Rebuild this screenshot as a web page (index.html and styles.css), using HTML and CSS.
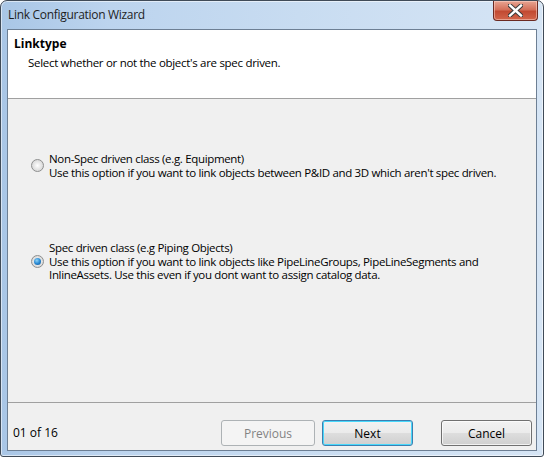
FILE: index.html
```html
<!DOCTYPE html>
<html lang="en">
<head>
    <meta charset="UTF-8">
    <title>Link Configuration Wizard</title>
    <link rel="stylesheet" href="styles.css">
</head>
<body>
    <div class="janela">
        <div class="barra-titulo">
            <span class="titulo">Link Configuration Wizard</span>
            <div class="fechar">
                <svg width="15" height="13" viewBox="0 0 15 13">
                    <path d="M2 1.5 L13 11.5 M13 1.5 L2 11.5" stroke="#3a3a3a" stroke-width="4.4" stroke-linecap="square"/>
                    <path d="M2 1.5 L13 11.5 M13 1.5 L2 11.5" stroke="#ffffff" stroke-width="2.4" stroke-linecap="square"/>
                </svg>
            </div>
        </div>
        <div class="cliente">
            <div class="cabecalho">
                <div class="cabecalho-titulo">Linktype</div>
                <div class="cabecalho-texto">Select whether or not the object's are spec driven.</div>
            </div>
            <div class="conteudo">
                <label class="opcao opcao-1">
                    <span class="radio"></span>
                    <span class="opcao-texto">Non-Spec driven class (e.g. Equipment)<br>Use this option if you want to link objects between P&amp;ID and 3D which aren't spec driven.</span>
                </label>
                <label class="opcao opcao-2">
                    <span class="radio marcado"></span>
                    <span class="opcao-texto">Spec driven class (e.g Piping Objects)<br>Use this option if you want to link objects like PipeLineGroups, PipeLineSegments and<br>InlineAssets. Use this even if you dont want to assign catalog data.</span>
                </label>
            </div>
            <div class="rodape">
                <span class="pagina">01 of 16</span>
                <div class="botoes">
                    <button class="botao desativado">Previous</button>
                    <button class="botao padrao">Next</button>
                    <button class="botao cancelar">Cancel</button>
                </div>
            </div>
        </div>
    </div>
</body>
</html>
```

FILE: styles.css
```css
body {
    margin: 0;
    font: 12px "Open Sans", "Noto Sans", sans-serif;
    color: #000;
}
div.janela {
    box-sizing: border-box;
    width: 544px;
    height: 457px;
    display: flex;
    flex-direction: column;
    padding: 0 6px 5px 6px;
    border: 1px solid #404b58;
    border-radius: 7px 7px 3px 3px;
    background: linear-gradient(90deg, #a9c6e6 0%, #bcd4ee 20%, #c8dcf1 55%, #d6e5f5 100%);
    box-shadow: inset 0 0 0 1px rgba(255, 255, 255, 0.55);
}
div.barra-titulo {
    height: 28px;
    display: flex;
    justify-content: space-between;
    align-items: flex-start;
}
span.titulo {
    margin: 5px 0 0 1px;
    font-size: 12px;
    letter-spacing: -0.3px;
    color: #1e1e1e;
}
div.fechar {
    width: 43px;
    height: 19px;
    margin-right: -1px;
    display: flex;
    align-items: center;
    justify-content: center;
    border: 1px solid #6b2a22;
    border-top: none;
    border-radius: 0 0 4px 4px;
    background: linear-gradient(180deg, #e8a593 0%, #d4705a 45%, #c24a32 55%, #d2654b 100%);
    box-shadow: inset 0 0 0 1px rgba(255, 220, 210, 0.5);
}
div.cliente {
    flex: 1;
    display: flex;
    flex-direction: column;
    border: 1px solid #6d7f94;
    background-color: #f0f0f0;
}
div.cabecalho {
    height: 69px;
    background-color: #fff;
    border-bottom: 1px solid #a0a0a0;
    padding: 6px 0 0 6px;
    box-sizing: border-box;
}
div.cabecalho-titulo {
    font-weight: bold;
    line-height: 16px;
}
div.cabecalho-texto {
    margin: 3px 0 0 14px;
    font-size: 11.5px;
    line-height: 16px;
    letter-spacing: -0.3px;
}
div.conteudo {
    flex: 1;
    padding: 0 0 0 23px;
}
label.opcao {
    display: flex;
    align-items: center;
    gap: 5px;
}
label.opcao-1 {
    margin-top: 53px;
}
label.opcao-2 {
    margin-top: 62px;
}
span.opcao-texto {
    font-size: 11.5px;
    line-height: 13.5px;
    letter-spacing: -0.33px;
}
span.radio {
    width: 11px;
    height: 11px;
    border-radius: 50%;
    border: 1px solid #8e8f8f;
    background: radial-gradient(circle at 50% 50%, #ffffff 0%, #e2e2e2 55%, #cfcfcf 100%);
    flex: none;
    position: relative;
}
span.radio.marcado::after {
    content: "";
    position: absolute;
    left: 2px;
    top: 2px;
    width: 7px;
    height: 7px;
    border-radius: 50%;
    background: radial-gradient(circle at 40% 35%, #8fd4f7 0%, #2a8ad4 50%, #0d4f8c 100%);
}
div.rodape {
    height: 48px;
    border-top: 1px solid #a0a0a0;
    display: flex;
    align-items: flex-start;
    justify-content: space-between;
    padding: 17px 4px 0 5px;
    box-sizing: border-box;
}
span.pagina {
    margin-top: 4px;
}
div.botoes {
    display: flex;
}
button.botao {
    font: 12px "Open Sans", "Noto Sans", sans-serif;
    width: 94px;
    height: 26px;
    border: 1px solid #707070;
    border-radius: 3px;
    background: linear-gradient(180deg, #f2f2f2 0%, #ebebeb 48%, #dddddd 52%, #cfcfcf 100%);
    box-shadow: inset 0 0 0 1px rgba(255, 255, 255, 0.7);
    color: #000;
    padding: 0;
}
button.desativado {
    background: #f4f4f4;
    border-color: #adb2b5;
    color: #838383;
    box-shadow: none;
}
button.padrao {
    width: 91px;
    margin-left: 7px;
    border-color: #3c7fb1;
    box-shadow: inset 0 0 0 1px #48d8fb;
}
button.cancelar {
    width: 91px;
    margin-left: 28px;
}
```
